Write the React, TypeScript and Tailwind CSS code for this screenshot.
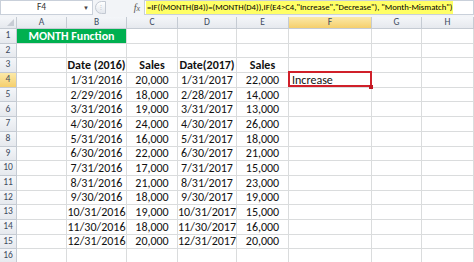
import React from "react";

const cols = ["A", "B", "C", "D", "E", "F", "G", "H"];

const data: [string, string, string, string][] = [
  ["1/31/2016", "20,000", "1/31/2017", "22,000"],
  ["2/29/2016", "18,000", "2/28/2017", "14,000"],
  ["3/31/2016", "19,000", "3/31/2017", "13,000"],
  ["4/30/2016", "24,000", "4/30/2017", "26,000"],
  ["5/31/2016", "16,000", "5/31/2017", "18,000"],
  ["6/30/2016", "22,000", "6/30/2017", "21,000"],
  ["7/31/2016", "17,000", "7/31/2017", "15,000"],
  ["8/31/2016", "21,000", "8/31/2017", "23,000"],
  ["9/30/2016", "18,000", "9/30/2017", "19,000"],
  ["10/31/2016", "19,000", "10/31/2017", "15,000"],
  ["11/30/2016", "18,000", "11/30/2017", "16,000"],
  ["12/31/2016", "20,000", "12/31/2017", "20,000"],
];

const font = { fontFamily: "Carlito, 'Open Sans', sans-serif" };

function Cell({
  children,
  className = "",
}: {
  children?: React.ReactNode;
  className?: string;
}) {
  return (
    <div
      className={`flex items-center overflow-visible whitespace-nowrap border-r border-b border-[#dadcdd] bg-white text-[12px] leading-none text-[#111] ${className}`}
    >
      {children}
    </div>
  );
}

function RowHead({ n, active }: { n: number; active?: boolean }) {
  return (
    <div
      className={`flex items-center justify-center border-r border-b border-[#c5cbd3] text-[9.5px] leading-none text-[#3d4b5e] ${
        active
          ? "bg-gradient-to-b from-[#fbe9a7] to-[#f5cf6c]"
          : "bg-gradient-to-b from-[#f4f6f9] to-[#e6e9ee]"
      }`}
    >
      {n}
    </div>
  );
}

export default function App() {
  const rows: React.ReactNode[] = [];

  rows.push(
    <React.Fragment key="r1">
      <RowHead n={1} />
      <Cell className="col-span-2 justify-center !bg-[#00b050] font-bold !text-white">
        MONTH Function
      </Cell>
      {cols.slice(2).map((c) => (
        <Cell key={c} />
      ))}
    </React.Fragment>
  );

  rows.push(
    <React.Fragment key="r2">
      <RowHead n={2} />
      {cols.map((c) => (
        <Cell key={c} />
      ))}
    </React.Fragment>
  );

  rows.push(
    <React.Fragment key="r3">
      <RowHead n={3} />
      <Cell />
      <Cell className="justify-center font-bold">Date (2016)</Cell>
      <Cell className="justify-center font-bold">Sales</Cell>
      <Cell className="justify-center font-bold">Date(2017)</Cell>
      <Cell className="justify-center font-bold">Sales</Cell>
      <Cell />
      <Cell />
      <Cell />
    </React.Fragment>
  );

  data.forEach((d, i) => {
    const n = i + 4;
    rows.push(
      <React.Fragment key={n}>
        <RowHead n={n} active={n === 4} />
        <Cell />
        <Cell className="justify-center">{d[0]}</Cell>
        <Cell className="justify-center">{d[1]}</Cell>
        <Cell className="justify-center">{d[2]}</Cell>
        <Cell className="justify-center">{d[3]}</Cell>
        {n === 4 ? (
          <Cell className="relative pl-[3px]">
            <span>Increase</span>
            <div className="pointer-events-none absolute -left-[1px] -top-[2px] h-[16px] w-[84px] border-2 border-[#d0202a]" />
            <div className="absolute -bottom-[2px] right-[-2px] h-[4px] w-[4px] bg-[#c01a24]" />
          </Cell>
        ) : (
          <Cell />
        )}
        <Cell />
        <Cell />
      </React.Fragment>
    );
  });

  rows.push(
    <React.Fragment key="r16">
      <RowHead n={16} />
      {cols.map((c) => (
        <Cell key={c} />
      ))}
    </React.Fragment>
  );

  return (
    <div className="h-[262px] w-[474px] overflow-hidden bg-white" style={font}>
      {/* formula bar */}
      <div className="flex h-[17px] items-start bg-[#f2f4f7]">
        <div className="relative flex h-[15px] w-[93px] items-center justify-center border border-[#c9d0da] bg-white pr-[10px] text-[9.5px] leading-none text-[#333]">
          F4
          <span className="absolute right-[3px] top-[4px] text-[6px] leading-none text-[#444]">▼</span>
        </div>
        <div className="flex h-[15px] w-[51px] items-center">
          <div className="ml-[2px] flex h-[13px] w-[11px] items-center justify-center rounded-l-full border border-[#c3c9d2] bg-gradient-to-b from-[#ffffff] to-[#e3e7ed]">
            <span className="text-[7px] leading-none text-[#b4bac4]">⁝</span>
          </div>
          <span
            className="ml-auto mr-[4px] text-[10px] italic leading-none text-[#555]"
            style={{ fontFamily: "'Liberation Serif', serif" }}
          >
            f<span className="text-[8px]">x</span>
          </span>
        </div>
        <div className="flex h-[15px] min-w-0 flex-1 items-center overflow-hidden border border-[#c9d0da] bg-white">
          <span className="ml-[1px] h-[13px] whitespace-nowrap bg-[#ffff66] px-[1px] text-[8.7px] leading-[13px] text-black">
            =IF((MONTH(B4))=(MONTH(D4)),IF(E4&gt;C4,"Increase","Decrease"), "Month-Mismatch")
          </span>
        </div>
      </div>

      {/* sheet */}
      <div className="grid grid-cols-[17px_50px_60px_51px_59px_52px_83px_50px_52px] grid-rows-[12px_repeat(16,14.7px)]">
        <div className="relative border-r border-b border-[#c5cbd3] bg-gradient-to-b from-[#f4f6f9] to-[#e6e9ee]">
          <div
            className="absolute bottom-[2px] right-[2px] h-0 w-0"
            style={{ borderBottom: "7px solid #c7ccd4", borderLeft: "7px solid transparent" }}
          />
        </div>
        {cols.map((c) => (
          <div
            key={c}
            className={`flex items-center justify-center border-r border-b border-[#c5cbd3] text-[9.5px] leading-none text-[#3d4b5e] ${
              c === "F"
                ? "bg-gradient-to-b from-[#fbe9a7] to-[#f5cf6c]"
                : "bg-gradient-to-b from-[#f4f6f9] to-[#e6e9ee]"
            }`}
          >
            {c}
          </div>
        ))}
        {rows}
      </div>
    </div>
  );
}
